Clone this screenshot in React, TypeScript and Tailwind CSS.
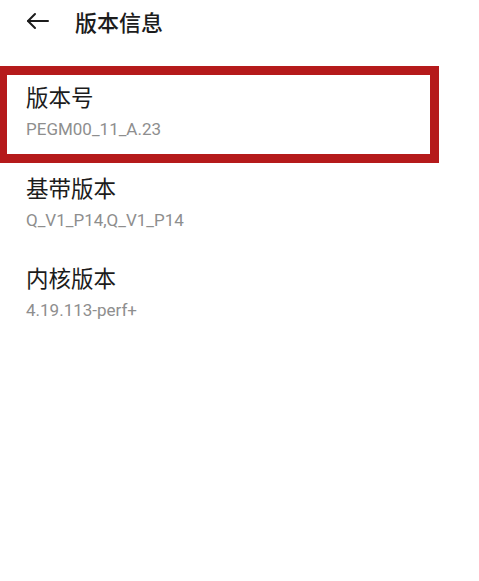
import React from 'react'

const cjk = { fontFamily: '"Noto Sans CJK SC", "Noto Sans", sans-serif' }

function InfoRow({ title, value }: { title: string; value: string }) {
  return (
    <>
      <div className="text-[22.5px] leading-[30px] text-[#1c1c1c]" style={cjk}>{title}</div>
      <div
        className="mt-[7px] text-[17px] leading-[22px] text-[#8e8e8e]"
        style={{ fontFamily: 'Roboto, "Noto Sans", sans-serif' }}
      >
        {value}
      </div>
    </>
  )
}

export default function App() {
  return (
    <div className="w-[479px] h-[581px] bg-white overflow-hidden">
      {/* Header */}
      <div className="h-[42px] flex items-center pl-[26px]">
        <svg width="24" height="18" viewBox="0 0 24 18" fill="none" stroke="#1c1c1c" strokeWidth="2" strokeLinecap="round" strokeLinejoin="round">
          <path d="M22 9H2" />
          <path d="M9 2L2 9l7 7" />
        </svg>
        <span className="ml-[25px] text-[22px] leading-[30px] font-medium text-[#1c1c1c]" style={cjk}>版本信息</span>
      </div>

      {/* Highlighted row */}
      <div className="mt-[24px] w-[439px] h-[97px] border-[9px] border-l-[7px] border-[#b51a1b] pl-[19px] pt-[6px]">
        <InfoRow title="版本号" value="PEGM00_11_A.23" />
      </div>

      <div className="pl-[26px] mt-[9px]">
        <InfoRow title="基带版本" value="Q_V1_P14,Q_V1_P14" />
      </div>

      <div className="pl-[26px] mt-[31px]">
        <InfoRow title="内核版本" value="4.19.113-perf+" />
      </div>
    </div>
  )
}
